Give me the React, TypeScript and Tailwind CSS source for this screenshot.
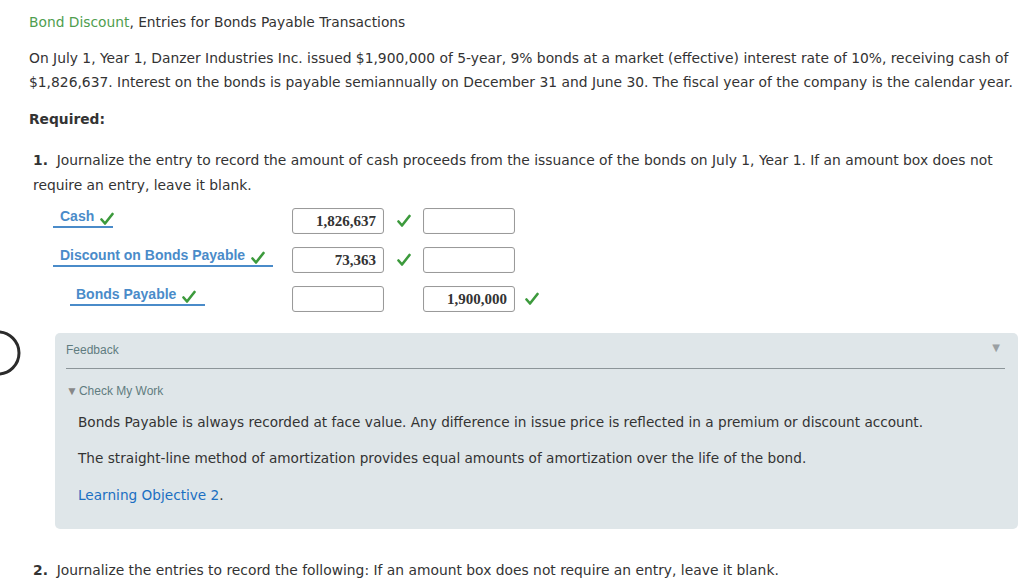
const rows = [
  { label: 'Cash', indent: false, debit: '1,826,637', credit: '', lineW: 'w-[60px]' },
  { label: 'Discount on Bonds Payable', indent: false, debit: '73,363', credit: '', lineW: 'w-[220px]' },
  { label: 'Bonds Payable', indent: true, debit: '', credit: '1,900,000', lineW: 'w-[135px]' },
]

function Check() {
  return (
    <svg width="14" height="14" viewBox="0 0 14 14" className="shrink-0">
      <path d="M1.5 7.5 L5 11.5 L12.5 2" fill="none" stroke="#3c9a3c" strokeWidth="2.6" strokeLinecap="round" strokeLinejoin="round" />
    </svg>
  )
}

function AmountBox({ value }: { value: string }) {
  return (
    <div className="flex h-[26px] w-[92px] items-center justify-end rounded-[3px] border border-[#9a9a9a] pr-[7px] font-['Liberation_Serif',serif] text-[15px] font-bold text-[#333] shadow-[inset_0_0_1px_rgba(0,0,0,0.15)]">
      {value}
    </div>
  )
}

export default function App() {
  return (
    <div className="relative h-[588px] w-[1024px] overflow-hidden bg-white font-['DejaVu_Sans',sans-serif] text-[13px] text-[#333]">
      <svg className="absolute left-0 top-[329px]" width="24" height="48" viewBox="0 0 24 48">
        <circle cx="-2" cy="24" r="21" fill="none" stroke="#2b2b2b" strokeWidth="3" />
      </svg>

      <div className="pl-[29px] pt-[13px] text-[13.8px] leading-[18px] whitespace-nowrap">
        <span className="text-[#4f9e4f]">Bond Discount</span>, Entries for Bonds Payable Transactions
      </div>

      <p className="mt-[15px] pl-[29px] text-[13.85px] leading-[24px] whitespace-nowrap">
        On July 1, Year 1, Danzer Industries Inc. issued $1,900,000 of 5-year, 9% bonds at a market (effective) interest rate of 10%, receiving cash of
        <br />
        $1,826,637. Interest on the bonds is payable semiannually on December 31 and June 30. The fiscal year of the company is the calendar year.
      </p>

      <p className="mt-[13px] pl-[29px] text-[13.8px] font-bold leading-[24px]">Required:</p>

      <p className="mt-[17px] pl-[33px] text-[13.85px] leading-[25px] whitespace-nowrap">
        <span className="font-bold">1.</span>&nbsp; Journalize the entry to record the amount of cash proceeds from the issuance of the bonds on July 1, Year 1. If an amount box does not
        <br />
        require an entry, leave it blank.
      </p>

      <div className="mt-[10px] flex flex-col gap-[13px]">
        {rows.map((row) => (
          <div key={row.label} className="flex h-[26px] items-center">
            <div className={`${row.indent ? 'pl-[70px]' : 'pl-[53px]'} w-[292px] shrink-0 self-start`}>
              <div className={`${row.lineW} flex items-end gap-[6px] border-b-2 border-[#4a8bc9] pb-[1px] ${row.indent ? 'pl-[6px]' : 'pl-[7px]'} font-['Liberation_Sans',sans-serif] text-[14px] font-bold leading-[17px] text-[#4a8bc9] whitespace-nowrap`}>
                <span>{row.label}</span>
                <span className="mb-[-1px]"><Check /></span>
              </div>
            </div>
            <AmountBox value={row.debit} />
            <div className="flex w-[39px] justify-center">{row.debit && <Check />}</div>
            <AmountBox value={row.credit} />
            <div className="flex w-[34px] justify-center">{row.credit && <Check />}</div>
          </div>
        ))}
      </div>

      <div className="ml-[55px] mt-[21px] h-[196px] w-[963px] rounded-[5px] bg-[#dfe6e9] px-[11px] pt-[9px]">
        <div className="flex items-start justify-between pr-[2px]">
          <span className="font-['Liberation_Sans',sans-serif] text-[12px] leading-[16px] text-[#5f7c80]">Feedback</span>
          <span className="mr-[5px] pt-[1px] text-[10px] leading-[10px] text-[#9aa0a3]">▼</span>
        </div>
        <div className="mr-[2px] mt-[10px] border-t-[1.5px] border-[#8c9599]" />
        <div className="mt-[14px] flex items-center font-['Liberation_Sans',sans-serif] text-[12px] leading-[16px] text-[#5f7c80]">
          <span className="mr-[1px] text-[12px] leading-[12px] text-[#888]">▼</span>Check My Work
        </div>
        <div className="pl-[12px] text-[13.65px] leading-[18px] text-[#333]">
          <p className="mt-[14px]">Bonds Payable is always recorded at face value. Any difference in issue price is reflected in a premium or discount account.</p>
          <p className="mt-[18px]">The straight-line method of amortization provides equal amounts of amortization over the life of the bond.</p>
          <p className="mt-[19px]"><span className="text-[#1b6fc2]">Learning Objective 2</span>.</p>
        </div>
      </div>

      <p className="mt-[32px] pl-[33px] text-[13.85px] leading-[18px] whitespace-nowrap">
        <span className="font-bold">2.</span>&nbsp; Journalize the entries to record the following: If an amount box does not require an entry, leave it blank.
      </p>
    </div>
  )
}
